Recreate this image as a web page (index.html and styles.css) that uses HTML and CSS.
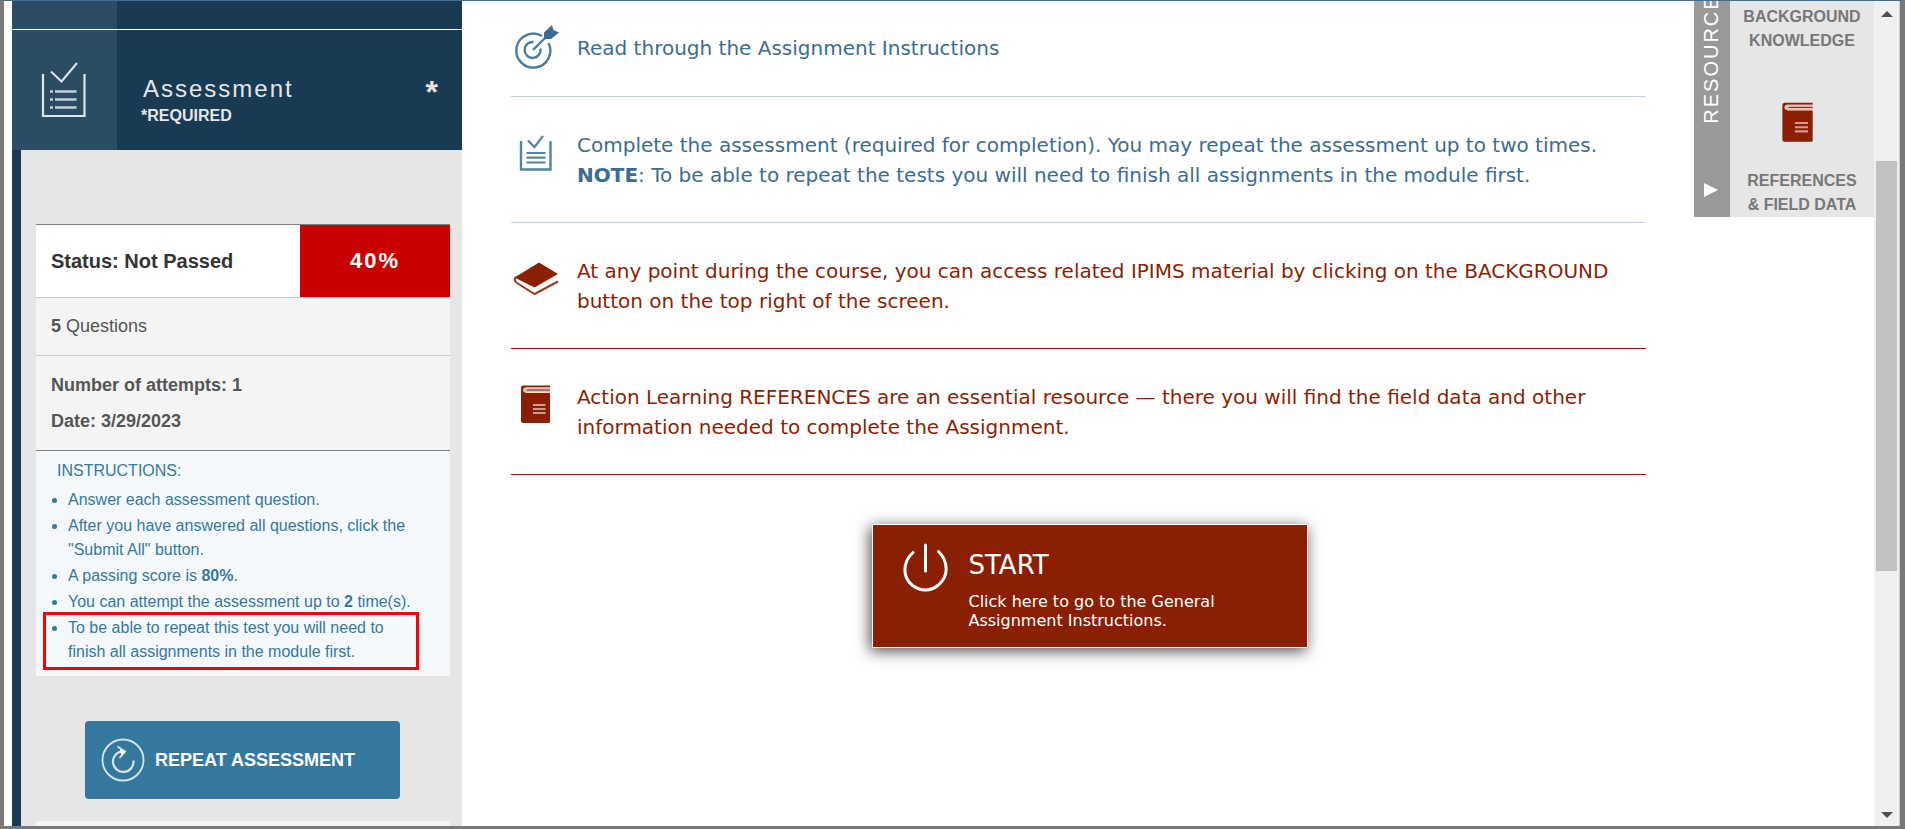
FILE: index.html
```
<!DOCTYPE html>
<html lang="en">
<head>
    <meta charset="UTF-8">
    <meta name="viewport" content="width=device-width, initial-scale=1.0">
    <title>Assessment</title>
    <link rel="stylesheet" href="styles.css">
</head>
<body>
    <!-- shared icon shapes -->
    <svg class="symbols" aria-hidden="true">
        <symbol id="icon-book" viewBox="0 0 44 44">
            <path fill="#8a1f04" d="M10 3.500h27v2H12.500v5.500H37V40a1 1 0 0 1-1 1H10a2 2 0 0 1-2-2V6a2.500 2.500 0 0 1 2-2.500z"/>
            <path fill="#e0c2ba" d="M12.500 5.500H37v5H12.500a2.500 2.500 0 0 1 0-5z"/>
            <path stroke="#8a1f04" stroke-width="1" d="M14 8h23"/>
            <path stroke="#cf9d90" stroke-width="2" d="M20 23h12.500M20 27h12.500M20 31h12.500"/>
        </symbol>
    </svg>

    <div class="window">
        <aside class="sidebar">
            <div class="nav-item nav-item-cut">
                <div class="nav-icon"></div>
            </div>
            <div class="nav-item">
                <div class="nav-icon">
                    <svg width="46" height="56" viewBox="0 0 46 56" fill="none" stroke="#dfe5e9" stroke-width="2.200">
                        <path d="M2 12v42h41.500V12"/>
                        <path stroke-width="2" d="M10 9.500l10.500 10L36 1"/>
                        <path stroke-width="2.600" stroke="#c5d0d8" d="M9 29.500h3M14 29.500h21.500M9 37.500h3M14 37.500h21.500M9 45.500h3M14 45.500h21.500"/>
                    </svg>
                </div>
                <div class="nav-text">
                    <h2>Assessment</h2>
                    <p>*REQUIRED</p>
                </div>
                <span class="nav-star">*</span>
            </div>

            <div class="sidebar-body">
                <section class="result">
                    <div class="status">
                        <div class="status-text">Status: Not Passed</div>
                        <div class="score">40%</div>
                    </div>
                    <p class="questions"><b>5</b> Questions</p>
                    <div class="attempts">
                        <p>Number of attempts: 1</p>
                        <p>Date: 3/29/2023</p>
                    </div>
                    <div class="instructions">
                        <h3>INSTRUCTIONS:</h3>
                        <ul>
                            <li>Answer each assessment question.</li>
                            <li>After you have answered all questions, click the "Submit All" button.</li>
                            <li>A passing score is <b>80%</b>.</li>
                            <li>You can attempt the assessment up to <b>2</b> time(s).</li>
                            <li class="marked">To be able to repeat this test you will need to finish all assignments in the module first.</li>
                        </ul>
                    </div>
                </section>

                <button type="button" class="repeat">
                    <svg width="44" height="44" viewBox="0 0 44 44" fill="none" stroke="#d6e4ec">
                        <circle cx="22" cy="22" r="20.500" stroke-width="1.800"/>
                        <path stroke-width="2.200" d="M32.500 22.500a10.300 10.300 0 1 1-12-9"/>
                        <path stroke-width="1.800" d="M16.500 8.500l7.500 5-5.500 6.500"/>
                        <path fill="#fff" stroke="none" d="M19 11l6 2.500-4.500 5z"/>
                    </svg>
                    REPEAT ASSESSMENT
                </button>

                <section class="next-result"></section>
            </div>
        </aside>

        <main class="content">
            <div class="step step-single">
                <svg class="step-icon" viewBox="0 0 48 44" fill="none" stroke="#4b7c9d" stroke-width="2.400">
                    <path d="M31 10A17 17 0 1 0 37.500 17"/>
                    <path d="M22.500 16A8 8 0 1 0 29.500 22.500"/>
                    <path d="M22 24L36 10"/>
                    <path fill="#3a6d91" stroke="none" d="M33 13V6.500L41 -1l1.500 5L48 6.500 40 13z"/>
                </svg>
                <p>Read through the Assignment Instructions</p>
            </div>
            <div class="step">
                <svg class="step-icon" viewBox="0 0 48 44" fill="none" stroke="#5482a1" stroke-width="2.400">
                    <path d="M10 11v28.500h29.500V11"/>
                    <path stroke-width="2.200" d="M17 10.500l6.500 6.500L32 6"/>
                    <path stroke-width="2.200" d="M15.500 23h19M15.500 27.700h19M15.500 32.500h19"/>
                </svg>
                <p>Complete the assessment (required for completion). You may repeat the assessment up to two times.<br>
                <b>NOTE</b>: To be able to repeat the tests you will need to finish all assignments in the module first.</p>
            </div>
            <div class="step step-red">
                <svg class="step-icon" viewBox="0 0 48 44">
                    <path fill="#8a1f04" d="M3.500 21.500L28 6.500 47 18 23.500 31.500z"/>
                    <path fill="none" stroke="#9b3d26" stroke-width="2" d="M6 21c-3 1-3 4 0 6l17.500 11L47 25.500"/>
                </svg>
                <p>At any point during the course, you can access related IPIMS material by clicking on the BACKGROUND button on the top right of the screen.</p>
            </div>
            <div class="step step-red">
                <svg class="step-icon"><use href="#icon-book"/></svg>
                <p>Action Learning REFERENCES are an essential resource — there you will find the field data and other information needed to complete the Assignment.</p>
            </div>

            <div class="start-row">
                <button type="button" class="start">
                    <svg width="46" height="50" viewBox="0 0 46 50" fill="none" stroke="#fff" stroke-width="3" stroke-linecap="round">
                        <path d="M22.500 3v26"/>
                        <path d="M10 10.500C-1.500 21 0 36 9.500 43.500c8 6 18 6 26-0.500C45.500 34.500 46 20 35.500 9.500"/>
                    </svg>
                    <span class="start-text">
                        <span class="start-title">START</span>
                        <span>Click here to go to the General Assignment Instructions.</span>
                    </span>
                </button>
            </div>
        </main>

        <nav class="resources">
            <div class="resources-tab">
                <span>RESOURCES</span>
                <svg width="14" height="14" viewBox="0 0 14 14"><path fill="#fff" d="M0 0l14 7-14 7z"/></svg>
            </div>
            <div class="resources-links">
                <a href="#">BACKGROUND KNOWLEDGE</a>
                <a href="#">
                    <svg width="46" height="46"><use href="#icon-book"/></svg>
                    REFERENCES<br>&amp; FIELD DATA
                </a>
            </div>
        </nav>

        <div class="scrollbar">
            <svg width="12" height="6" viewBox="0 0 12 6"><path fill="#505050" d="M6 0l6 6H0z"/></svg>
            <div class="track"><div class="thumb"></div></div>
            <svg width="12" height="6" viewBox="0 0 12 6"><path fill="#505050" d="M0 0h12L6 6z"/></svg>
        </div>
    </div>
</body>
</html>
```
FILE: styles.css
```
* {
    box-sizing: border-box;
}

body {
    margin: 0;
    font-family: "Liberation Sans", Arial, sans-serif;
    background-color: #fff;
}

h2, h3, p, ul {
    margin: 0;
    padding: 0;
}

h2, h3 {
    font-weight: normal;
}

button {
    font-family: inherit;
    color: #fff;
    cursor: pointer;
}

.symbols {
    position: absolute;
    width: 0;
    height: 0;
}

.window {
    display: flex;
    height: 100vh;
    overflow: hidden;
    padding-left: 8px;
    border-top: 1px solid #3f6f92;
    border-right: 5px solid #777877;
    border-bottom: 3px solid #777877;
    border-left: 4px solid #7b7977;
}

/* sidebar */
.sidebar {
    display: flex;
    flex-direction: column;
    flex: none;
    width: 450px;
}

.nav-item {
    display: flex;
    flex: none;
    align-items: center;
    height: 120px;
    padding-right: 24px;
    background-color: #183a52;
    color: #e6e6e6;
}

.nav-item-cut {
    height: 29px;
    border-bottom: 1px solid #fff;
}

.nav-icon {
    display: flex;
    align-items: center;
    justify-content: center;
    align-self: stretch;
    width: 105px;
    padding-right: 2px;
    background-color: #2b4d64;
}

.nav-text {
    flex: 1;
    padding: 22px 0 0 24px;
}

.nav-text h2 {
    padding-left: 2px;
    font-size: 24px;
    line-height: 30px;
    letter-spacing: 2px;
}

.nav-text p {
    font-size: 16px;
    line-height: 24px;
    font-weight: bold;
}

.nav-star {
    padding-top: 4px;
    font-size: 32px;
    line-height: 32px;
    font-weight: bold;
}

.sidebar-body {
    display: flex;
    flex-direction: column;
    flex: 1;
    align-items: center;
    padding: 74px 12px 0 15px;
    border-left: 9px solid #183a52;
    background-color: #e6e6e6;
}

.result {
    width: 100%;
    border-top: 1px solid #808080;
    background-color: #f4f4f4;
    color: #555;
    font-size: 18px;
}

.status {
    display: flex;
    border-bottom: 1px solid #c8c8c8;
    background-color: #fff;
    line-height: 72px;
    font-weight: bold;
}

.status-text {
    flex: 1;
    padding-left: 15px;
    font-size: 20px;
    color: #333;
}

.score {
    width: 150px;
    background-color: #c80000;
    color: #fff;
    font-size: 22px;
    letter-spacing: 2px;
    text-align: center;
}

.questions {
    padding: 10px 15px 11px;
    border-bottom: 1px solid #c8c8c8;
    line-height: 36px;
}

.attempts {
    padding: 11px 15px;
    border-bottom: 1px solid #808080;
    line-height: 36px;
    font-weight: bold;
}

.instructions {
    padding: 8px 15px 10px;
    background-color: #f4f8fb;
    color: #35789d;
    font-size: 16px;
    line-height: 24px;
}

.instructions h3 {
    padding: 0 0 5px 6px;
    font-size: 16px;
}

.instructions ul {
    padding-left: 17px;
}

.instructions li {
    position: relative;
    margin-bottom: 2px;
}

.instructions .marked {
    margin-right: 25px;
}

/* highlight around the last rule */
.marked::after {
    content: "";
    position: absolute;
    top: -4px;
    right: -9px;
    bottom: -6px;
    left: -25px;
    border: 3px solid #f00;
}

.repeat {
    display: flex;
    flex: none;
    align-items: center;
    gap: 10px;
    width: 315px;
    height: 78px;
    margin: 45px 1px 22px 0;
    padding: 0 16px;
    border: none;
    border-radius: 4px;
    background-color: #35789d;
    font-size: 18px;
    font-weight: bold;
}

.next-result {
    flex: 1;
    width: 100%;
    background-color: #f4f4f4;
}

/* main column */
.content {
    flex: 1;
    margin: 0 48px 0 49px;
    font-family: "DejaVu Sans", Verdana, sans-serif;
}

.step {
    display: flex;
    gap: 18px;
    padding: 33px 0 32px;
    border-bottom: 1px solid #c3d2de;
    color: #3a6d91;
    font-size: 20px;
    line-height: 30px;
}

.step-single {
    padding: 32px 0 33px;
}

.step-icon {
    flex: none;
    width: 48px;
    height: 44px;
    overflow: visible;
}

.step-single .step-icon {
    margin: -7px 0;
}

.step-red {
    border-color: #8a1f04;
    color: #8a1f04;
}

.start-row {
    display: flex;
    justify-content: center;
    padding: 49px 0 0 22px;
}

.start {
    display: flex;
    align-items: flex-start;
    gap: 20px;
    width: 436px;
    padding: 17px 60px 17px 30px;
    border: 1px solid #fff;
    background-color: #8a1f04;
    box-shadow: -2px 3px 14px rgba(0, 0, 0, 0.7);
    text-align: left;
    font-size: 16px;
    line-height: 19px;
}

.start svg {
    flex: none;
}

.start-text span {
    display: block;
}

.start-text .start-title {
    padding: 6px 0 10px;
    font-size: 26px;
    line-height: 34px;
}

/* resources drawer */
.resources {
    display: flex;
    align-self: flex-start;
    flex: none;
    height: 216px;
    overflow: hidden;
}

.resources-tab {
    display: flex;
    flex-direction: column;
    align-items: center;
    justify-content: flex-end;
    gap: 59px;
    width: 36px;
    padding: 0 2px 20px 0;
    background-color: #999;
}

.resources-tab span {
    writing-mode: vertical-rl;
    transform: rotate(180deg);
    color: #fff;
    font-size: 20px;
    letter-spacing: 2px;
}

.resources-tab svg {
    flex: none;
}

.resources-links {
    display: flex;
    flex-direction: column;
    justify-content: space-between;
    width: 144px;
    padding-top: 4px;
    background-color: #e6e6e6;
}

.resources-links a {
    color: #777;
    font-size: 16px;
    line-height: 24px;
    font-weight: bold;
    text-align: center;
    text-decoration: none;
}

.resources-links svg {
    display: block;
    margin: 0 auto 24px 44px;
}

.scrollbar {
    display: flex;
    flex-direction: column;
    align-items: center;
    flex: none;
    width: 26px;
    padding: 10px 0 8px;
    border-right: 1px solid #ccc;
    background-color: #f0f0f0;
}

.scrollbar svg {
    flex: none;
}

.track {
    flex: 1;
    width: 21px;
    margin: 0 3px 0 2px;
    padding-top: 144px;
}

.thumb {
    height: 63%;
    background-color: #c1c1c1;
}
```
